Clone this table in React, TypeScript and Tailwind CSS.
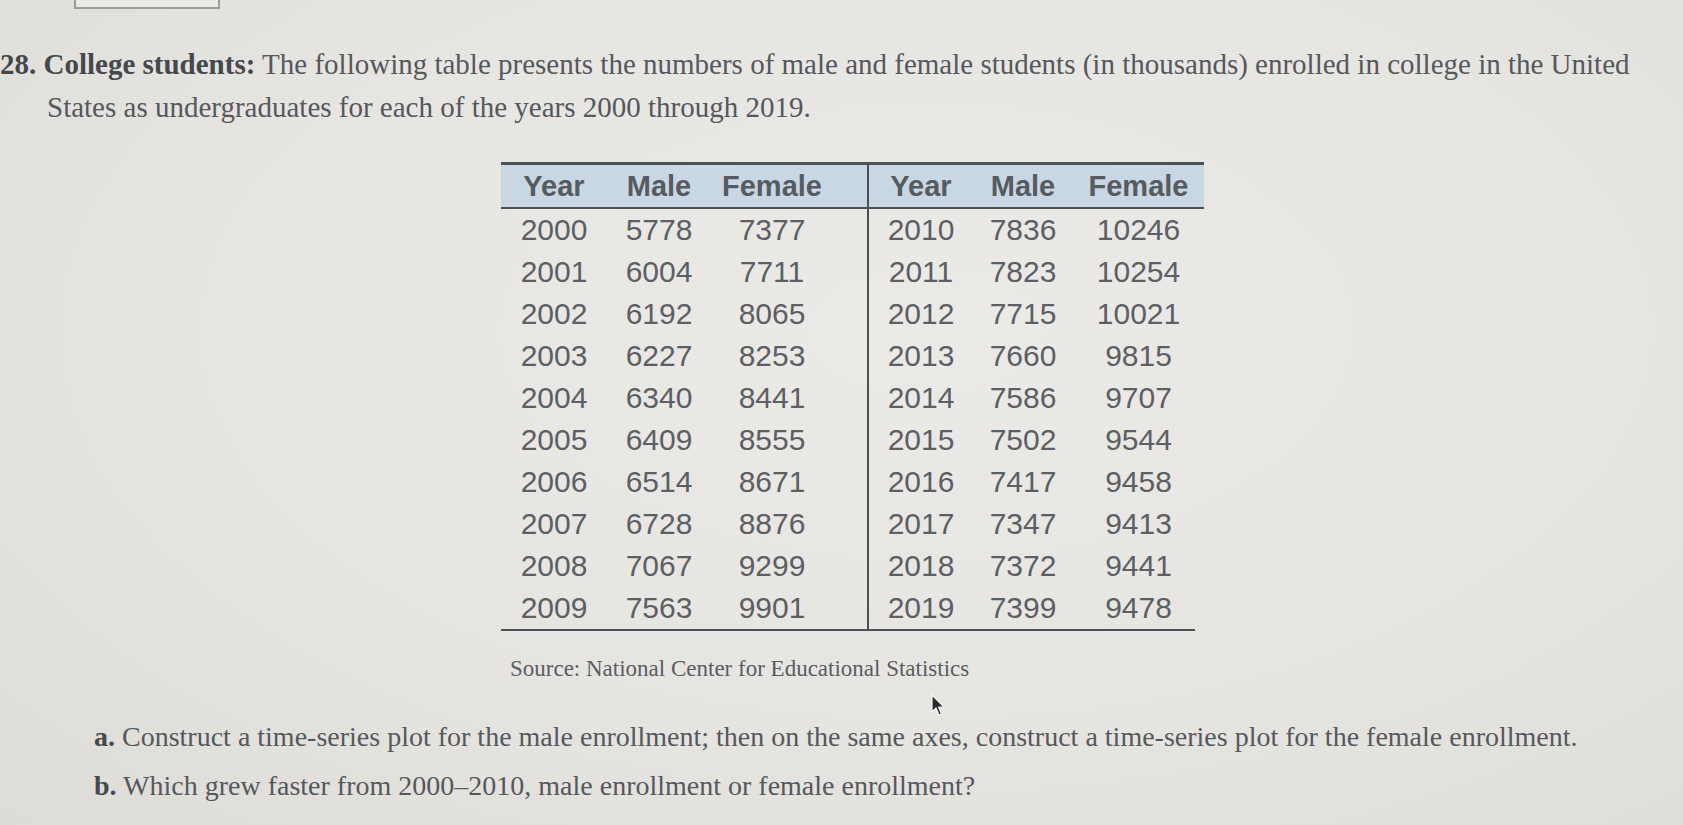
import React from 'react';

const rows: [string, string, string, string, string, string][] = [
	['2000', '5778', '7377', '2010', '7836', '10246'],
	['2001', '6004', '7711', '2011', '7823', '10254'],
	['2002', '6192', '8065', '2012', '7715', '10021'],
	['2003', '6227', '8253', '2013', '7660', '9815'],
	['2004', '6340', '8441', '2014', '7586', '9707'],
	['2005', '6409', '8555', '2015', '7502', '9544'],
	['2006', '6514', '8671', '2016', '7417', '9458'],
	['2007', '6728', '8876', '2017', '7347', '9413'],
	['2008', '7067', '9299', '2018', '7372', '9441'],
	['2009', '7563', '9901', '2019', '7399', '9478'],
];

const headers = ['Year', 'Male', 'Female', 'Year', 'Male', 'Female'];

// per-column cell classes, written out so tailwind picks them up
const cellCls = [
	'text-center',
	'text-center',
	'text-center pr-[34px]',
	'text-center border-l-2 border-[#4d5156]',
	'text-center',
	'text-center',
];

const Cursor = () => (
	<svg className="absolute left-[930px] top-[694px]" width="16" height="24" viewBox="0 0 16 24">
		<path d="M2 1 L2 18 L6 14 L9 21 L11.5 20 L8.6 13.2 L14 13 Z" fill="#2a2a2a" stroke="#f4f4f4" strokeWidth="1.2" strokeLinejoin="round" />
	</svg>
);

const App = () => {
	return (
		<div className="relative w-[1683px] h-[825px] overflow-hidden bg-[radial-gradient(ellipse_at_55%_40%,#ebeae7_0%,#e6e5e1_55%,#dddcd7_100%)] text-[#55585c] font-['Liberation_Serif',serif]">
			{/* bit of the previous box, cut by the top edge */}
			<div className="ml-[74px] w-[146px] h-[9px] border-2 border-t-0 border-[#9a9b9c] bg-[#ebeae7]" />

			{/* question text */}
			<p className="mt-[34px] pl-[47px] -indent-[47px] text-[29px] leading-[43px]">
				<span className="font-bold text-[#45484c]">28. College students:</span> The following table presents the numbers of male and female students (in thousands) enrolled in college in the United
				<br />
				States as undergraduates for each of the years 2000 through 2019.
			</p>

			{/* data table */}
			<div className="ml-[501px] mt-[33px] w-[703px] font-['Liberation_Sans',sans-serif] text-[30px] text-[#5c5f63]">
				<div className="grid grid-cols-[106px_104px_156px_106px_100px_131px] h-[47px] bg-[#c9d6e3] border-t-[3px] border-b-2 border-[#4d5156]">
					{headers.map((h, i) => (
						<div key={i} className={`${cellCls[i]} flex items-center justify-center font-bold text-[29px] text-[#565b61]`}>
							{h}
						</div>
					))}
				</div>
				<div className="w-[694px] border-b-2 border-[#4d5156]">
					{rows.map((r) => (
						<div key={r[0]} className="grid grid-cols-[106px_104px_156px_106px_100px_131px] h-[42px]">
							{r.map((v, i) => (
								<div key={i} className={`${cellCls[i]} flex items-center justify-center leading-none`}>
									{v}
								</div>
							))}
						</div>
					))}
				</div>
			</div>

			<p className="ml-[510px] mt-[24px] text-[23px] leading-[28px] text-[#5a5d61]">Source: National Center for Educational Statistics</p>

			{/* parts */}
			<div className="ml-[94px] mt-[29px] text-[28px] leading-[49px]">
				<p>
					<span className="font-bold text-[#45484c]">a.</span> Construct a time-series plot for the male enrollment; then on the same axes, construct a time-series plot for the female enrollment.
				</p>
				<p>
					<span className="font-bold text-[#45484c]">b.</span> Which grew faster from 2000–2010, male enrollment or female enrollment?
				</p>
			</div>

			<Cursor />
		</div>
	);
};

export default App;
